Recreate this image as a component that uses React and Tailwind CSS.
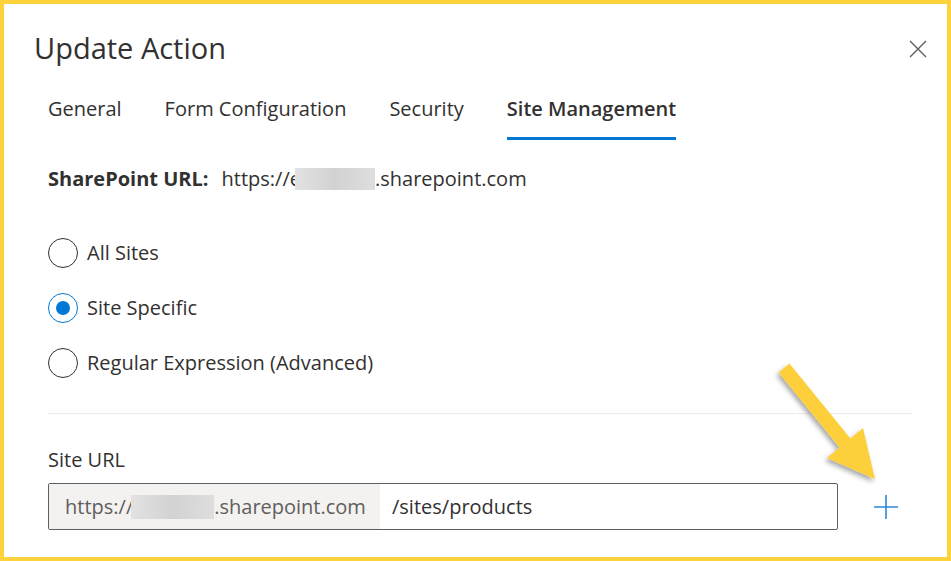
import { useState } from 'react'

const FONT = { fontFamily: '"Open Sans", "Noto Sans", sans-serif' }

function Radio({ label, checked, onSelect }) {
  return (
    <button type="button" onClick={onSelect} className="flex items-center h-[30px] gap-[9px] text-left">
      <span
        className={
          'w-[30px] h-[30px] rounded-full border flex items-center justify-center ' +
          (checked ? 'border-[#0078d4]' : 'border-[#323130]')
        }
      >
        {checked && <span className="w-[14px] h-[14px] rounded-full bg-[#0078d4]" />}
      </span>
      <span className="text-[20px] leading-none text-[#323130]">{label}</span>
    </button>
  )
}

function Blur({ className }) {
  return <span className={'inline-block bg-gradient-to-r from-[#e2e2e2] via-[#d2d2d2] to-[#dedede] ' + className} />
}

export default function App() {
  const [scope, setScope] = useState('site')
  const tabs = ['General', 'Form Configuration', 'Security', 'Site Management']

  return (
    <div className="w-[951px] h-[561px] border-[4px] border-[#fdd23c] bg-white relative overflow-hidden" style={FONT}>
      {/* Header */}
      <div className="flex items-start justify-between pl-[30px] pr-[20px] pt-[29px]">
        <h1 className="text-[29px] leading-none font-medium text-[#323130]">Update Action</h1>
        <button type="button" className="mt-[7px] w-[18px] h-[18px] text-[#605e5c]">
          <svg viewBox="0 0 18 18" className="w-[18px] h-[18px]" fill="none" stroke="currentColor" strokeWidth="1.4">
            <path d="M1 1 L17 17 M17 1 L1 17" />
          </svg>
        </button>
      </div>

      {/* Tabs */}
      <div className="flex items-start gap-[43px] pl-[44px] mt-[37px]">
        {tabs.map((t) => {
          const active = t === 'Site Management'
          return (
            <div key={t} className="flex flex-col items-center">
              <span
                className={
                  'text-[20px] leading-none text-[#323130] ' + (active ? 'font-semibold' : 'font-normal')
                }
              >
                {t}
              </span>
              <span className={'mt-[18px] h-[3px] w-full ' + (active ? 'bg-[#0078d4]' : 'bg-transparent')} />
            </div>
          )
        })}
      </div>

      {/* Body */}
      <div className="pl-[44px] pr-[35px]">
        <div className="flex items-center mt-[28px] text-[20px] leading-none text-[#323130]">
          <span className="font-bold">SharePoint URL:</span>
          <span className="ml-[13px] flex items-center">
            https://e
            <Blur className="w-[80px] h-[22px] -ml-[6px]" />
            .sharepoint.com
          </span>
        </div>

        <div className="flex flex-col gap-[25px] mt-[48px]">
          <Radio label="All Sites" checked={scope === 'all'} onSelect={() => setScope('all')} />
          <Radio label="Site Specific" checked={scope === 'site'} onSelect={() => setScope('site')} />
          <Radio label="Regular Expression (Advanced)" checked={scope === 'regex'} onSelect={() => setScope('regex')} />
        </div>

        <div className="h-px bg-[#edebe9] mt-[35px]" />

        <div className="mt-[36px] text-[20px] leading-none font-medium text-[#323130]">Site URL</div>

        <div className="flex items-center mt-[13px]">
          <div className="flex w-[790px] h-[47px] border border-[#605e5c] rounded-[2px] overflow-hidden">
            <div className="w-[331px] bg-[#f3f2f1] flex items-center pl-[16px] text-[20px] text-[#605e5c] whitespace-nowrap">
              https://
              <Blur className="w-[83px] h-[24px] -ml-[2px]" />
              .sharepoint.com
            </div>
            <div className="flex-1 flex items-center pl-[12px] text-[20px] text-[#323130]">/sites/products</div>
          </div>
          <button type="button" className="ml-[36px] w-[24px] h-[24px] text-[#2b88d8]">
            <svg viewBox="0 0 24 24" className="w-[24px] h-[24px]" fill="none" stroke="currentColor" strokeWidth="1.6">
              <path d="M12 0 V24 M0 12 H24" />
            </svg>
          </button>
        </div>
      </div>

      {/* Annotation arrow */}
      <svg className="absolute left-[-4px] top-[-4px] pointer-events-none" width="951" height="561">
        <defs>
          <filter id="sh" x="-20%" y="-20%" width="140%" height="140%">
            <feDropShadow dx="-2" dy="3" stdDeviation="2.5" floodColor="#000" floodOpacity="0.35" />
          </filter>
        </defs>
        <polygon
          points="789.4,363.6 850.4,438.6 863,428 875,479 827,458 839.6,447.4 778.6,372.4"
          fill="#fdd03a"
          filter="url(#sh)"
        />
      </svg>
    </div>
  )
}
